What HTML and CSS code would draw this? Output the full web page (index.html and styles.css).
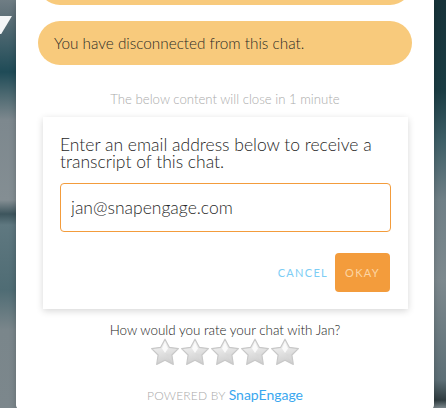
FILE: index.html
```html
<!DOCTYPE html>
<html lang="en">
<head>
    <meta charset="UTF-8">
    <meta name="viewport" content="width=device-width, initial-scale=1.0">
    <title>Chat Ended</title>
    <link rel="stylesheet" href="styles.css">
</head>
<body>
    <div class="backdrop">
        <div class="glare"></div>
        <div class="chat-panel">
            <div class="bubble bubble-prev"></div>
            <div class="bubble">You have disconnected from this chat.</div>
            <p class="notice">The below content will close in 1 minute</p>

            <div class="transcript-card">
                <p class="prompt">Enter an email address below to receive a transcript of this chat.</p>
                <input class="email-input" type="text" value="jan@snapengage.com">
                <div class="card-actions">
                    <button class="btn-cancel">CANCEL</button>
                    <button class="btn-okay">OKAY</button>
                </div>
            </div>

            <p class="rate-label">How would you rate your chat with Jan?</p>
            <div class="stars" id="stars"></div>

            <p class="powered">POWERED BY <span class="brand">SnapEngage</span></p>
        </div>
    </div>

    <script>
        // Build the five rating stars
        const starSvg = `
            <svg class="star" width="30" height="28" viewBox="0 0 30 28">
                <defs>
                    <linearGradient id="starFill" x1="0" y1="0" x2="0.25" y2="1">
                        <stop offset="0" stop-color="#fdfdfd"/>
                        <stop offset="0.5" stop-color="#e6e6e6"/>
                        <stop offset="1" stop-color="#cfcfcf"/>
                    </linearGradient>
                </defs>
                <path d="M15 1.2 L19.3 9.3 L28.4 10.6 L21.9 17 L23.3 26.4 L15 22.2 L6.7 26.4 L8.1 17 L1.6 10.6 L10.7 9.3 Z"
                      fill="url(#starFill)" stroke="#c8c8c8" stroke-width="1.2" stroke-linejoin="round"/>
                <path d="M15 4.5 L18 10.6 L15 15 L12 10.6 Z" fill="#ffffff" opacity="0.8"/>
                <path d="M15 15 L21 16.8 L22.2 24.6 Z" fill="#d9d9d9" opacity="0.6"/>
            </svg>`;
        const stars = document.getElementById('stars');
        for (let i = 0; i < 5; i++) {
            stars.insertAdjacentHTML('beforeend', starSvg);
        }
    </script>
</body>
</html>
```

FILE: styles.css
```css
body {
    margin: 0;
    padding: 0;
    font-family: Lato, "Open Sans", Arial, sans-serif;
    background: #ffffff;
}

p {
    margin: 0;
}

/* blurred photo behind the chat window */
.backdrop {
    position: relative;
    height: 408px;
    background:
        linear-gradient(to bottom, #6f7d84 0px, #61727a 14px, #3e5e68 45px, #1f4b57 72px, #4d6971 95px,
            #7d888e 120px, #848e93 200px, #3d555d 214px, #5f7880 225px, #4f6c74 290px, #7a868b 330px, #7c878c 408px)
            left top / 16px 408px no-repeat,
        linear-gradient(to bottom, #173339 0px, #1a3c43 90px, #3d5e66 140px, #6f7f86 200px, #7d898e 280px,
            #5d6f76 380px, #2f3c40 400px, #7b878c 408px)
            right top / 14px 408px no-repeat,
        #6c7b82;
}

.glare {
    position: absolute;
    left: 0;
    top: 16px;
    width: 12px;
    height: 18px;
    background: #f4f6f7;
    clip-path: polygon(0 0, 100% 0, 10% 100%, 0 100%);
}

.chat-panel {
    position: relative;
    width: 374px;
    height: 410px;
    margin-left: 16px;
    padding: 0 22px;
    background: #ffffff;
    border-radius: 0 0 5px 5px;
    box-shadow: 0 2px 6px rgba(0, 0, 0, 0.22);
    overflow: hidden;
}

.bubble {
    height: 44px;
    line-height: 44px;
    padding-left: 16px;
    margin-top: 16px;
    background: #f8ca7c;
    border-radius: 22px;
    color: #2b2a26;
    font-size: 15.3px;
    font-weight: 300;
}

.bubble-prev {
    margin-top: -39px;
}

.notice {
    margin-top: 26px;
    text-align: center;
    font-size: 13.2px;
    line-height: 16px;
    font-weight: 300;
    color: #ababab;
}

.transcript-card {
    margin: 10px 4px 0 5px;
    padding: 19px 17px 17px 17px;
    background: #ffffff;
    box-shadow: 0 2px 7px rgba(0, 0, 0, 0.16);
}

.prompt {
    font-size: 17.5px;
    line-height: 17px;
    font-weight: 300;
    color: #1f1f1f;
}

.email-input {
    display: block;
    box-sizing: border-box;
    width: 100%;
    height: 49px;
    margin-top: 13px;
    padding: 0 10px;
    border: 1px solid #f39c3c;
    border-radius: 4px;
    font-family: Lato, "Open Sans", Arial, sans-serif;
    font-size: 17.5px;
    font-weight: 300;
    color: #2a2a2a;
    outline: none;
}

.card-actions {
    display: flex;
    justify-content: flex-end;
    align-items: center;
    gap: 7px;
    margin-top: 21px;
    padding-right: 1px;
}

.card-actions button {
    font-family: Lato, "Open Sans", Arial, sans-serif;
    font-size: 11px;
    letter-spacing: 1.3px;
    border: none;
    cursor: pointer;
    background: none;
    padding: 0;
}

.btn-cancel {
    color: #7ccdf5;
}

.btn-okay {
    width: 55px;
    height: 39px;
    background: #f39c3c !important;
    color: #fcd5a2;
    border-radius: 4px;
}

.rate-label {
    margin-top: 13px;
    text-align: center;
    font-size: 13.4px;
    line-height: 16px;
    font-weight: 300;
    color: #222222;
}

.stars {
    display: flex;
    justify-content: center;
    margin-top: 0;
    padding-right: 1px;
}

.star {
    display: block;
}

.powered {
    margin-top: 20px;
    text-align: center;
    font-size: 12px;
    letter-spacing: 0.2px;
    font-weight: 300;
    color: #a9a9a9;
}

.brand {
    color: #3aa7ef;
    font-size: 14px;
    font-weight: normal;
    letter-spacing: 0;
}
```
